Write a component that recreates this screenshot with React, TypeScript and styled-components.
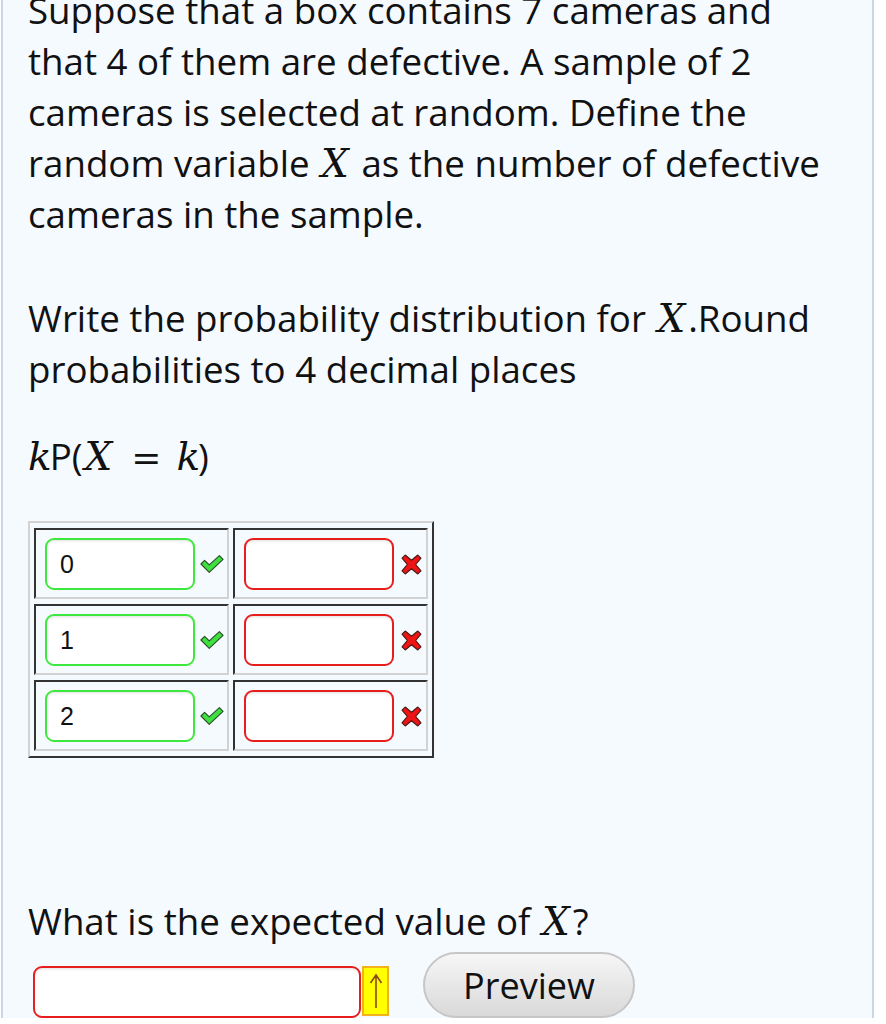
import styled, { createGlobalStyle } from 'styled-components';

const GlobalStyle = createGlobalStyle`
    html, body {
        margin: 0;
        padding: 0;
        background: #ffffff;
        overflow: hidden;
    }
`;

const Panel = styled.div`
    box-sizing: border-box;
    width: 873px;
    min-height: 100vh;
    margin-left: 1px;
    padding: 0 32px 0 25px;
    background: #f5faff;
    border-left: 2px solid #c9d8e6;
    border-right: 2px solid #c9d8e6;
    font-family: "Open Sans", "Noto Sans", sans-serif;
    font-size: 36.7px;
    line-height: 51px;
    color: #111;
`;

const Para = styled.p<{ $top: number }>`
    margin: ${p => p.$top}px 0 0;
`;

const MathVar = styled.span<{ $tight?: boolean }>`
    font-family: "DejaVu Serif", "Liberation Serif", serif;
    font-style: italic;
    font-size: 39px;
    padding: ${p => (p.$tight ? '0' : '0 3px 0 2px')};
    letter-spacing: ${p => (p.$tight ? '-2px' : '0')};
`;

const MathOp = styled.span`
    font-family: "DejaVu Serif", "Liberation Serif", serif;
    font-size: 36px;
    padding: 0 15px 0 16px;
`;

const Table = styled.table`
    margin-top: 38px;
    border-collapse: separate;
    border-spacing: 4px 5px;
    border-top: 2px solid #d2d2d2;
    border-left: 2px solid #d2d2d2;
    border-right: 2px solid #333;
    border-bottom: 2px solid #333;
`;

const Cell = styled.td`
    padding: 8px 3px 7px 9px;
    border-top: 2px solid #333;
    border-left: 2px solid #333;
    border-right: 2px solid #d2d2d2;
    border-bottom: 2px solid #d2d2d2;
`;

const CellInner = styled.div`
    display: flex;
    align-items: center;
    gap: 5px;
`;

const Field = styled.div<{ $ok: boolean; $w: number }>`
    box-sizing: border-box;
    width: ${p => p.$w}px;
    height: 52px;
    padding-left: 13px;
    display: flex;
    align-items: center;
    background: #fff;
    border: 2px solid ${p => (p.$ok ? '#3ee83e' : '#e81e1e')};
    border-radius: 9px;
    box-shadow: inset 0 3px 3px -2px rgba(0, 0, 0, 0.12);
    font-family: "Liberation Sans", Arial, sans-serif;
    font-size: 25px;
    color: #111;
`;

const IconBox = styled.span`
    display: inline-flex;
    width: 24px;
    justify-content: center;
`;

const AnswerRow = styled.div`
    display: flex;
    align-items: flex-end;
    margin-top: 5px;
    padding-left: 5px;
`;

const Hint = styled.div`
    box-sizing: border-box;
    width: 27px;
    height: 50px;
    margin: 0 0 2px 1px;
    display: flex;
    align-items: center;
    justify-content: center;
    background: #ffff00;
    border: 2px solid #f3b21c;
`;

const PreviewButton = styled.button`
    box-sizing: border-box;
    width: 212px;
    height: 66px;
    margin-left: 34px;
    border: 2px solid #c6c6c6;
    border-radius: 33px;
    background: linear-gradient(#f6f6f6, #d9d9d9);
    font-family: "Open Sans", "Noto Sans", sans-serif;
    font-size: 36px;
    color: #111;
`;

const Check = () => (
    <svg width="26" height="20" viewBox="0 0 26 20">
        <path d="M1 10 L5 6 L10 11 L21 1 L25 5 L10 19 Z" fill="#3de03d" stroke="#2a4a2a" strokeWidth="1.2" strokeLinejoin="round" />
    </svg>
);

const Cross = () => (
    <svg width="21" height="21" viewBox="0 0 20 20">
        <path d="M4 1 L10 6 L16 1 L19 4 L14 10 L19 16 L16 19 L10 14 L4 19 L1 16 L6 10 L1 4 Z" fill="#ee1414" stroke="#4a1a1a" strokeWidth="1.1" strokeLinejoin="round" />
    </svg>
);

const UpArrow = () => (
    <svg width="14" height="36" viewBox="0 0 14 36">
        <path d="M7 2 V35 M1.5 10 L7 2 L12.5 10" fill="none" stroke="#8a4a10" strokeWidth="1.6" />
    </svg>
);

const rows = ['0', '1', '2'];

const App = () => {
    return (
        <>
            <GlobalStyle />
            <Panel>
                <Para $top={-15}>
                    Suppose that a box contains 7 cameras and that 4 of them are defective. A sample of 2 cameras is
                    selected at random. Define the random variable <MathVar>X</MathVar> as the number of defective
                    cameras in the sample.
                </Para>
                <Para $top={53}>
                    Write the probability distribution for <MathVar>X</MathVar>.Round probabilities to 4 decimal places
                </Para>
                <Para $top={36}>
                    <MathVar $tight>k</MathVar>P(<MathVar>X</MathVar>
                    <MathOp>=</MathOp>
                    <MathVar $tight>k</MathVar>)
                </Para>
                <Table>
                    <tbody>
                        {rows.map(k => (
                            <tr key={k}>
                                <Cell>
                                    <CellInner>
                                        <Field $ok={true} $w={150}>{k}</Field>
                                        <IconBox><Check /></IconBox>
                                    </CellInner>
                                </Cell>
                                <Cell>
                                    <CellInner>
                                        <Field $ok={false} $w={150} />
                                        <IconBox><Cross /></IconBox>
                                    </CellInner>
                                </Cell>
                            </tr>
                        ))}
                    </tbody>
                </Table>
                <Para $top={138}>
                    What is the expected value of <MathVar>X</MathVar>?
                </Para>
                <AnswerRow>
                    <Field $ok={false} $w={328} />
                    <Hint><UpArrow /></Hint>
                    <PreviewButton>Preview</PreviewButton>
                </AnswerRow>
            </Panel>
        </>
    );
};

export default App;
